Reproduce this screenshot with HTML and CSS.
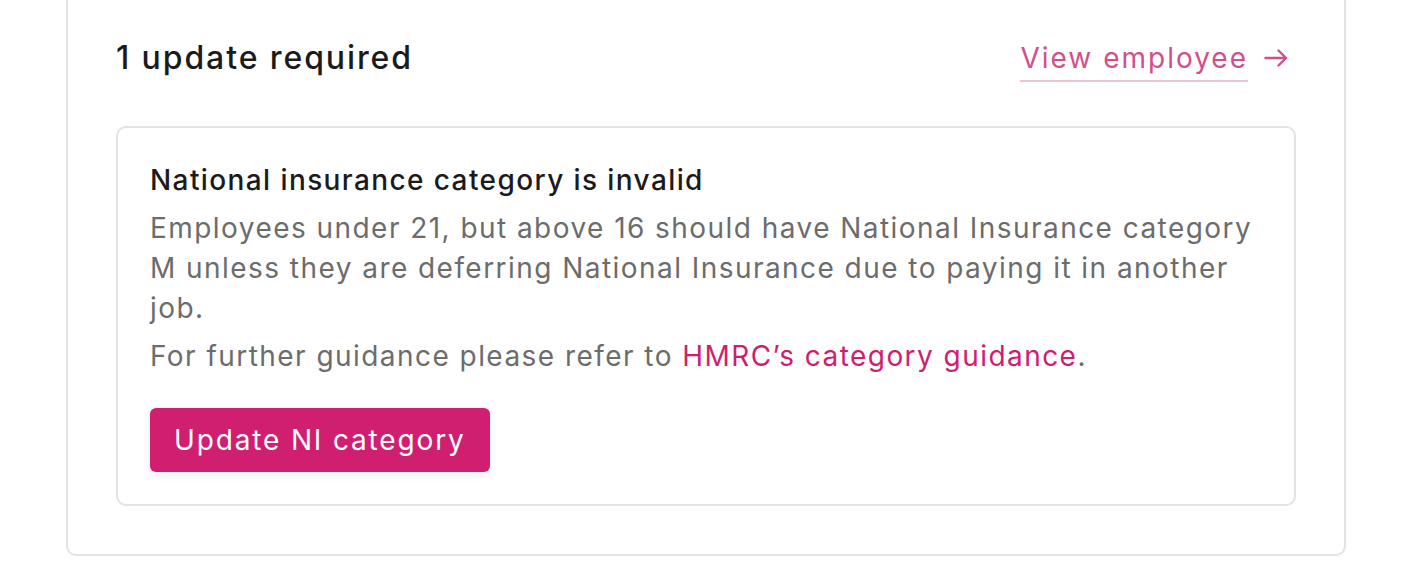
FILE: index.html
```html
<!DOCTYPE html>
<html lang="en">
<head>
<meta charset="utf-8">
<title>Updates required</title>
<link rel="stylesheet" href="styles.css">
</head>
<body>
<div class="page">
  <section class="card">
    <header class="card-header">
      <h2 class="card-title">1 update required</h2>
      <a class="view-link" href="#">
        <span class="view-link-text">View employee</span>
        <svg class="view-link-arrow" viewBox="0 0 24 24" width="24" height="24" aria-hidden="true">
          <path d="M1.5 12H22M14.5 4.5L22 12L14.5 19.5" fill="none" stroke="currentColor" stroke-width="2.4" stroke-linecap="round" stroke-linejoin="round"/>
        </svg>
      </a>
    </header>
    <div class="issue">
      <h3 class="issue-title">National insurance category is invalid</h3>
      <p class="issue-text">Employees under 21, but above 16 should have National Insurance category M unless they are deferring National Insurance due to paying it in another job.</p>
      <p class="issue-text">For further guidance please refer to <a class="issue-link" href="#">HMRC’s category guidance</a>.</p>
      <button class="btn-primary" type="button">Update NI category</button>
    </div>
  </section>
</div>
</body>
</html>
```
FILE: styles.css
```css
* { box-sizing: border-box; }

html, body {
  margin: 0;
  background: #ffffff;
}

body {
  font-family: "Inter", "Noto Sans", sans-serif;
  color: #1b1b1b;
}

.page {
  padding-left: 66px;
}

.card {
  width: 1280px;
  margin-top: -16px;
  border: 2px solid #e3e3e3;
  border-radius: 10px;
  padding: 48px;
  background: #fff;
}

.card-header {
  display: flex;
  align-items: flex-start;
  justify-content: space-between;
  height: 48px;
  margin-bottom: 44px;
}

.card-title {
  margin: 0;
  font-size: 32px;
  line-height: 48px;
  font-weight: 500;
  letter-spacing: 1.9px;
  color: #1b1b1b;
}

.view-link {
  display: flex;
  align-items: flex-start;
  gap: 16px;
  margin-top: 4px;
  margin-right: 8px;
  color: #d24f8c;
  text-decoration: none;
  font-size: 28px;
  letter-spacing: 2px;
  line-height: 40px;
}

.view-link-text {
  display: block;
  padding-bottom: 2px;
  border-bottom: 2px solid #efc2d8;
}

.view-link-arrow {
  display: block;
  width: 24px;
  height: 24px;
  margin-top: 8px;
}

.issue {
  border: 2px solid #e3e3e3;
  border-radius: 10px;
  padding: 32px;
}

.issue-title {
  margin: 0 0 8px;
  font-size: 28px;
  line-height: 40px;
  font-weight: 500;
  letter-spacing: 1.4px;
  color: #1b1b1b;
}

.issue-text {
  margin: 0 0 8px;
  font-size: 28px;
  line-height: 40px;
  font-weight: 400;
  letter-spacing: 1.45px;
  color: #6c6c6c;
}

.issue-link {
  color: #d01e6f;
  text-decoration: none;
}

.btn-primary {
  display: block;
  margin-top: 32px;
  height: 64px;
  padding: 0 24px;
  border: none;
  border-radius: 6px;
  background: #d01f70;
  color: #ffffff;
  font-family: inherit;
  font-size: 28px;
  font-weight: 400;
  letter-spacing: 1.85px;
  box-shadow: 0 3px 8px rgba(0, 0, 0, 0.08);
  cursor: pointer;
}
```
